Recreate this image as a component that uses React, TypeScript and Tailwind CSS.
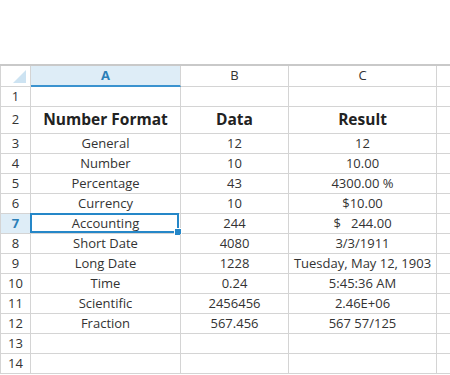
import React from 'react'

const rows: [string, string, string][] = [
  ['', '', ''],
  ['Number Format', 'Data', 'Result'],
  ['General', '12', '12'],
  ['Number', '10', '10.00'],
  ['Percentage', '43', '4300.00 %'],
  ['Currency', '10', '$10.00'],
  ['Accounting', '244', '$   244.00'],
  ['Short Date', '4080', '3/3/1911'],
  ['Long Date', '1228', 'Tuesday, May 12, 1903'],
  ['Time', '0.24', '5:45:36 AM'],
  ['Scientific', '2456456', '2.46E+06'],
  ['Fraction', '567.456', '567 57/125'],
  ['', '', ''],
  ['', '', ''],
]

const cell = 'border-r border-b border-[#d4d4d4] flex items-center justify-center whitespace-pre'

const App = () => {
  return (
    <div className="w-[450px] h-[375px] bg-white overflow-hidden text-[#333] text-[13px]" style={{ fontFamily: '"Open Sans", sans-serif' }}>
      <div className="h-[64px]" />
      <div className="border-t-2 border-[#c9c9c9] grid grid-cols-[31px_150px_108px_148px_1fr]">
        {/* column headers */}
        <div className="relative h-[21px] border-l border-r border-b border-[#d4d4d4]">
          <svg className="absolute right-[4px] bottom-[3px]" width="13" height="13" viewBox="0 0 13 13">
            <polygon points="13,0 13,13 0,13" fill="#cde3f2" />
          </svg>
        </div>
        <div className="h-[21px] bg-[#deedf7] border-r border-[#d4d4d4] border-b-2 border-b-[#3b93cf] flex items-center justify-center font-bold text-[#2b7fb8] pt-[1px]">A</div>
        <div className={`h-[21px] ${cell}`}>B</div>
        <div className={`h-[21px] ${cell}`}>C</div>
        <div className={`h-[21px] ${cell} border-r-0`} />

        {rows.map((r, i) => {
          const n = i + 1
          const h = n === 2 ? 'h-[27px]' : 'h-[20px]'
          const bold = n === 2 ? 'font-bold text-[15.5px] text-[#222]' : ''
          const sel = n === 7
          return (
            <React.Fragment key={n}>
              <div className={`${h} ${cell} border-l ${sel ? 'bg-[#deedf7] text-[#2b7fb8] font-bold' : ''}`}>{n}</div>
              <div className={`${h} ${cell} ${bold} relative`}>
                {r[0]}
                {sel && (
                  <>
                    <div className="absolute -left-px -top-px right-[1px] bottom-0 border-2 border-[#2587c8]" />
                    <div className="absolute -right-[2px] -bottom-[3px] w-[6px] h-[6px] bg-[#2587c8] border border-white box-content" />
                  </>
                )}
              </div>
              <div className={`${h} ${cell} ${bold}`}>{r[1]}</div>
              <div className={`${h} ${cell} ${bold}`}>{r[2]}</div>
              <div className={`${h} ${cell} border-r-0`} />
            </React.Fragment>
          )
        })}
      </div>
    </div>
  )
}

export default App
